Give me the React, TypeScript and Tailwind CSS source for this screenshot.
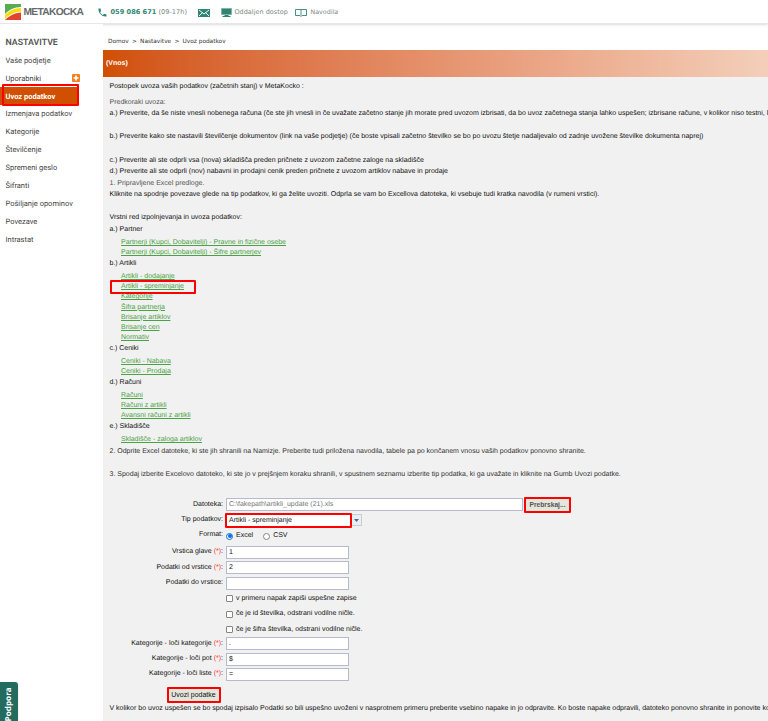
import clsx from "clsx";
import type { ReactNode } from "react";

const MENU_ITEMS = [
  "Vaše podjetje",
  "Uporabniki",
  "Uvoz podatkov",
  "Izmenjava podatkov",
  "Kategorije",
  "Številčenje",
  "Spremeni geslo",
  "Šifranti",
  "Pošiljanje opominov",
  "Povezave",
  "Intrastat",
];
const ACTIVE_ITEM = "Uvoz podatkov";

interface LinkGroup {
  title: string;
  links: string[];
}

const LINK_GROUPS: LinkGroup[] = [
  {
    title: "a.) Partner",
    links: [
      "Partnerji (Kupci, Dobavitelji) - Pravne in fizične osebe",
      "Partnerji (Kupci, Dobavitelji) - Šifre partnerjev",
    ],
  },
  {
    title: "b.) Artikli",
    links: [
      "Artikli - dodajanje",
      "Artikli - spreminjanje",
      "Kategorije",
      "Šifra partnerja",
      "Brisanje artiklov",
      "Brisanje cen",
      "Normativ",
    ],
  },
  { title: "c.) Ceniki", links: ["Ceniki - Nabava", "Ceniki - Prodaja"] },
  { title: "d.) Računi", links: ["Računi", "Računi z artikli", "Avansni računi z artikli"] },
  { title: "e.) Skladišče", links: ["Skladišče - zaloga artiklov"] },
];
const HIGHLIGHTED_LINK = "Artikli - spreminjanje";

function TopBar() {
  return (
    <header className="relative flex h-6 shrink-0 items-center border-b border-gray-200 bg-white pt-[2px] font-['DejaVu_Sans',sans-serif] text-[6.6px] text-[#7b8783] shadow-sm">
      <svg className="-mt-[2px] ml-[5px] h-4 w-4" viewBox="0 0 16 16">
        <path d="M0 0h16v3C9 3 4 6 0 10z" fill="#57ab52" />
        <path d="M16 4v3.5C9 8 4 11 0 15v-4C4 7 9 4 16 4z" fill="#f8de0a" />
        <path d="M16 8.5V16H0C4 12 9 9 16 8.5z" fill="#e0452f" />
      </svg>
      <span className="ml-[2.5px] w-[60px] font-['Liberation_Sans',sans-serif] text-[10.2px] font-bold tracking-[-0.65px] whitespace-nowrap text-[#66696b]">
        METAKOCKA
      </span>

      <svg className="ml-[14px] h-[9px] w-[9px]" viewBox="0 0 18 18" fill="#2f8573">
        <path d="M1 1h4l1.5 5L4 8c1.5 3 3 4.5 6 6l2-2.5 5 1.5v4C8 18 0 10 1 1z" />
      </svg>
      <span className="ml-1 w-[78px] whitespace-nowrap">
        <b className="text-[#2f8573]">059 086 671</b> (09-17h)
      </span>

      <svg className="ml-[9px] h-2 w-3" viewBox="0 0 24 16">
        <path d="M0 0h24v16H0z" fill="#2f8573" />
        <path d="m2 2 10 8L22 2M2 14l7-7M22 14l-7-7" stroke="#fff" strokeWidth="1.8" fill="none" />
      </svg>

      <svg className="ml-[11px] h-[9px] w-[11px]" viewBox="0 0 22 18">
        <path d="M1 1h20v12H1zM7 14h8v2h4v2H3v-2h4z" fill="#2f8573" />
        <path d="M1 1h20v12H1z" stroke="#7fb5a9" strokeWidth="2" fill="none" />
      </svg>
      <span className="ml-[3px] w-[54px] text-[6.5px] whitespace-nowrap">Oddaljen dostop</span>

      <svg className="ml-[6px] h-2 w-3" viewBox="0 0 24 16">
        <path d="M1 1h22v12h-9l-2 2-2-2H1zM12 2v11" stroke="#2f8573" strokeWidth="1.8" fill="#fff" />
      </svg>
      <span className="ml-[4px] text-[6.3px] whitespace-nowrap">Navodila</span>
    </header>
  );
}

function Sidebar() {
  return (
    <aside className="relative w-[103px] shrink-0 bg-white font-[Roboto,sans-serif]">
      <h2 className="mt-[13px] pl-[5.5px] text-[8.8px] leading-3 font-semibold whitespace-nowrap text-[#555]">
        NASTAVITVE
      </h2>
      <nav className="mt-[2.5px] flex flex-col text-[7.5px] text-[#444]">
        {MENU_ITEMS.map((item) => (
          <a
            key={item}
            className={clsx(
              "relative flex h-[17.9px] items-center pl-[5.5px] whitespace-nowrap",
              item === ACTIVE_ITEM && "mr-[25px] bg-[#d04f00] font-bold text-white",
            )}
          >
            {item}
            {item === "Uporabniki" && (
              <span className="absolute left-[71.5px] flex h-2 w-2 items-center justify-center rounded-[1px] bg-[#f08020]">
                <svg className="h-[6px] w-[6px]" viewBox="0 0 6 6">
                  <path d="M3 .5v5M.5 3h5" stroke="#fff" strokeWidth="1.7" />
                </svg>
              </span>
            )}
            {item === ACTIVE_ITEM && (
              <span className="absolute -top-[3px] left-[2px] h-[22px] w-[77px] rounded-[1px] border-2 border-[#f00]" />
            )}
          </a>
        ))}
      </nav>

      {/* Podpora tab */}
      <div className="absolute bottom-0 left-0 flex h-[39.5px] w-[18px] justify-center overflow-hidden rounded-tr-[3px] bg-[#236b5f] pt-[9px] shadow">
        <span className="rotate-180 font-['Open_Sans',sans-serif] text-[8.2px] leading-[18px] font-bold text-white [writing-mode:vertical-rl]">
          Podpora
        </span>
      </div>
    </aside>
  );
}

function Line({ children, className }: { children: ReactNode; className?: string }) {
  return <p className={clsx("h-[10px] leading-[10px] whitespace-nowrap", className)}>{children}</p>;
}

function Instructions() {
  return (
    <section className="pl-[6.5px]">
      <Line>Postopek uvoza vaših podatkov (začetnih stanj) v MetaKocko :</Line>
      <Line className="mt-[6px] text-[#555]">Predkoraki uvoza:</Line>
      <Line className="mt-px">
        a.) Preverite, da še niste vnesli nobenega računa (če ste jih vnesli in če uvažate začetno stanje jih morate
        pred uvozom izbrisati, da bo uvoz začetnega stanja lahko uspešen; izbrisane račune, v kolikor niso testni, lahko
      </Line>
      <Line className="mt-[13px]">
        b.) Preverite kako ste nastavili številčenje dokumentov (link na vaše podjetje) (če boste vpisali začetno
        številko se bo po uvozu štetje nadaljevalo od zadnje uvožene številke dokumenta naprej)
      </Line>
      <Line className="mt-[14px]">
        c.) Preverite ali ste odprli vsa (nova) skladišča preden pričnete z uvozom začetne zaloge na skladišče
      </Line>
      <Line className="mt-[1.5px]">
        d.) Preverite ali ste odprli (nov) nabavni in prodajni cenik preden pričnete z uvozom artiklov nabave in prodaje
      </Line>
      <Line className="mt-[1.5px] text-[#555]">1. Pripravljene Excel predloge.</Line>
      <Line className="mt-px">
        Kliknite na spodnje povezave glede na tip podatkov, ki ga želite uvoziti. Odprla se vam bo Excellova datoteka,
        ki vsebuje tudi kratka navodila (v rumeni vrstici).
      </Line>
      <Line className="mt-[13px]">Vrstni red izpolnjevanja in uvoza podatkov:</Line>
      <div className="mt-[2px] flex flex-col gap-[0.7px]">
        {LINK_GROUPS.map((group) => (
          <div key={group.title}>
            <Line>{group.title}</Line>
            <ul className="mt-[3.2px] ml-[11.5px]">
              {group.links.map((link) => (
                <li key={link} className="relative h-[10.15px] leading-[10.15px] whitespace-nowrap">
                  <a className="text-[#4aa245] underline">{link}</a>
                  {link === HIGHLIGHTED_LINK && (
                    <span className="absolute -top-[2px] -left-[11px] h-[14px] w-[86px] rounded-[1px] border-2 border-[#f00]" />
                  )}
                </li>
              ))}
            </ul>
          </div>
        ))}
      </div>
      <Line className="mt-px text-[#333]">
        2. Odprite Excel datoteke, ki ste jih shranili na Namizje. Preberite tudi priložena navodila, tabele pa po
        končanem vnosu vaših podatkov ponovno shranite.
      </Line>
      <Line className="mt-[13.5px] text-[#333]">
        3. Spodaj izberite Excelovo datoteko, ki ste jo v prejšnjem koraku shranili, v spustnem seznamu izberite tip
        podatka, ki ga uvažate in kliknite na Gumb Uvozi podatke.
      </Line>
    </section>
  );
}

interface RowProps {
  label?: string;
  required?: boolean;
  children: ReactNode;
}

function Row({ label, required, children }: RowProps) {
  return (
    <div className="flex h-[15.4px] items-center">
      <label className="w-[120px] shrink-0 text-right whitespace-nowrap">
        {label}
        {required && <span className="text-[#f33]"> (*)</span>}
        {label && ":"}
      </label>
      <div className="ml-[3px] flex items-center">{children}</div>
    </div>
  );
}

function TextBox({ value }: { value: string }) {
  return (
    <div className="h-[13px] w-[123px] border border-[#b8b8cf] bg-white pl-[2px] leading-[12px]">{value}</div>
  );
}

function CheckBox({ label }: { label: string }) {
  return (
    <>
      <span className="h-[7px] w-[7px] rounded-[1px] border border-[#858585] bg-white" />
      <span className="mt-px ml-[3px] whitespace-nowrap">{label}</span>
    </>
  );
}

function Radio({ label, checked }: { label: string; checked?: boolean }) {
  return (
    <>
      <span
        className={clsx(
          "mt-px flex h-[7px] w-[7px] items-center justify-center rounded-full border bg-white",
          checked ? "border-[#0b6fe0]" : "border-[#858585]",
        )}
      >
        {checked && <span className="h-[4px] w-[4px] rounded-full bg-[#0b6fe0]" />}
      </span>
      <span className="mt-px ml-[3px]">{label}</span>
    </>
  );
}

function ImportForm() {
  return (
    <form className="mt-[17px]">
      <Row label="Datoteka">
        <div className="h-[13px] w-[297px] border border-[#b8b8cf] bg-white pl-[2px] leading-[12px] text-[#777]">
          C:\fakepath\artikli_update (21).xls
        </div>
        <button
          type="button"
          className="ml-[1px] h-[16px] w-[47px] rounded-[1px] border-2 border-[#f00] bg-[#e4e6dc] text-[6.7px] leading-[10px] font-bold text-[#555]"
        >
          Prebrskaj...
        </button>
      </Row>
      <Row label="Tip podatkov">
        <div className="-ml-px h-[15px] w-[127px] rounded-[1px] border-2 border-[#f00] bg-white pl-[2px] leading-[12px]">
          Artikli - spreminjanje
        </div>
        <span className="flex h-[12px] w-[10px] items-center justify-center border border-l-0 border-[#c5cfd5] bg-[#eaf0f2]">
          <svg className="h-[3px] w-[5px]" viewBox="0 0 5 3">
            <path d="M0 0h5L2.5 3z" fill="#4a6a9c" />
          </svg>
        </span>
      </Row>
      <Row label="Format">
        <Radio label="Excel" checked />
        <span className="w-[10px]" />
        <Radio label="CSV" />
      </Row>
      <div className="pt-[1.5px]">
        <Row label="Vrstica glave" required>
          <TextBox value="1" />
        </Row>
        <Row label="Podatki od vrstice" required>
          <TextBox value="2" />
        </Row>
        <Row label="Podatki do vrstice">
          <TextBox value="" />
        </Row>
        <Row>
          <CheckBox label="v primeru napak zapiši uspešne zapise" />
        </Row>
        <Row>
          <CheckBox label="če je id številka, odstrani vodilne ničle." />
        </Row>
        <Row>
          <CheckBox label="če je šifra številka, odstrani vodilne ničle." />
        </Row>
      </div>
      <div className="-mt-[1px]">
        <Row label="Kategorije - loči kategorije" required>
          <TextBox value="." />
        </Row>
        <Row label="Kategorije - loči pot" required>
          <TextBox value="$" />
        </Row>
        <Row label="Kategorije - loči liste" required>
          <TextBox value="=" />
        </Row>
      </div>
      <button
        type="button"
        className="mt-[5px] ml-[63.5px] block h-[16px] w-[54px] rounded-[1px] border-2 border-[#f00] bg-[#e4e6dc] leading-[12px] whitespace-nowrap"
      >
        Uvozi podatke
      </button>
    </form>
  );
}

export default function App() {
  return (
    <div className="flex h-[721px] w-[768px] flex-col overflow-hidden bg-white [text-rendering:geometricPrecision]">
      <TopBar />
      <div className="flex min-h-0 flex-1">
        <Sidebar />
        <main className="flex min-w-0 flex-1 flex-col overflow-hidden font-['Liberation_Sans',sans-serif] text-[7px] text-[#111]">
          <div className="flex h-[26px] shrink-0 items-center gap-[3.3px] pt-[10px] pl-[5px] font-['DejaVu_Sans',sans-serif] text-[5.8px] text-[#333]">
            <span>Domov</span>
            <span>&gt;</span>
            <span>Nastavitve</span>
            <span>&gt;</span>
            <span>Uvoz podatkov</span>
          </div>
          <div className="flex h-[27px] shrink-0 items-center bg-linear-to-r from-[#d04f00] to-[#f3cfba] pt-[2px] pl-[3px] font-bold text-white">
            (Vnos)
          </div>
          <div className="flex-1 bg-[#f1f1f1] pt-[4.8px]">
            <Instructions />
            <ImportForm />
            <Line className="mt-[1px] ml-[6.5px]">
              V kolikor bo uvoz uspešen se bo spodaj izpisalo Podatki so bili uspešno uvoženi v nasprotnem primeru
              preberite vsebino napake in jo odpravite. Ko boste napake odpravili, datoteko ponovno shranite in ponovite
              korak
            </Line>
          </div>
        </main>
      </div>
    </div>
  );
}
